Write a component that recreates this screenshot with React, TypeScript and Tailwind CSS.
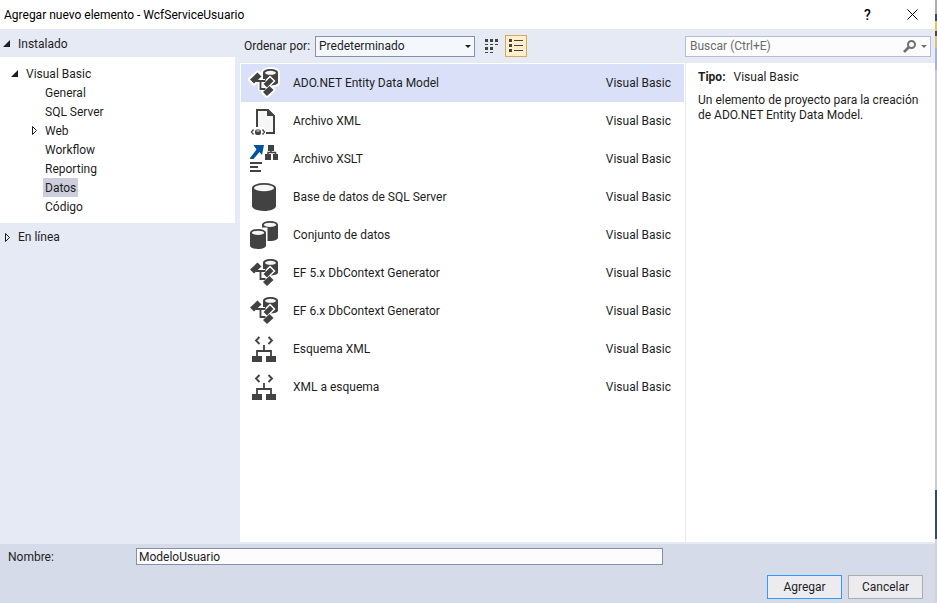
import { ReactNode, useState } from "react";

type IconProps = { selected?: boolean };

type Template = {
  name: string;
  icon: (props: IconProps) => ReactNode;
};

const DARK = "#424242";

const EntityIcon = ({ selected }: IconProps) => (
  <svg width="28" height="28" viewBox="0 0 28 28" className="overflow-visible" aria-hidden="true">
    {selected && (
      <g fill="#fff" stroke="#fff" strokeWidth="4" strokeLinejoin="round">
        <path d="M13 3.500v10c0 2 3 3 7 3s8-1 8-3v-10C28 1.500 24.500 0 20.500 0S13 1.500 13 3.500z" />
        <path d="M0 10.500 7.500 3.500l4 4L4 14.500z" />
        <path d="M13 23l6.500-6 4 4L17 27z" />
        <path d="M7 12h6M10 12v8h5" fill="none" />
      </g>
    )}
    <path d="M13 3.500v10c0 2 3 3 7 3s8-1 8-3v-10C28 1.500 24.500 0 20.500 0S13 1.500 13 3.500z" fill={DARK} />
    <ellipse cx="20.500" cy="3.800" rx="5.500" ry="2" fill="#f6f6f6" />
    <path d="M12.500 15 20 7.500l4.500 4.500-7.500 7.500z" fill={DARK} stroke="#fff" strokeWidth="1.500" />
    <path d="M7 12h8M10.500 12v8h4" fill="none" stroke="#fff" strokeWidth="4" />
    <path d="M0 10.500 7.500 3.500l4 4L4 14.500z" fill={DARK} />
    <path d="M13 23l6.500-6 4 4L17 27z" fill={DARK} />
    <path d="M6 12h9.500M10.500 12v8h5" fill="none" stroke={DARK} strokeWidth="1.800" />
  </svg>
);

const XmlFileIcon = () => (
  <svg width="28" height="28" viewBox="0 0 28 28" aria-hidden="true">
    <path d="M7 20V3h11l6 6v17h-8" fill="#f6f6f6" stroke={DARK} strokeWidth="2" />
    <path d="M17 2v7h8z" fill={DARK} />
    <rect x="5" y="20" width="10" height="8" fill="#fff" />
    <path d="M3.500 22.500 1.500 25l2 2.500M12.500 22.500l2 2.500-2 2.500" fill="none" stroke={DARK} strokeWidth="1.300" />
    <rect x="5" y="22.500" width="6" height="5.500" rx="2" fill={DARK} />
    <path d="M6.500 24h3" stroke="#fff" strokeWidth="1" />
  </svg>
);

const XsltIcon = () => (
  <svg width="28" height="28" viewBox="0 0 28 28" aria-hidden="true">
    <path d="M3.500 0H14l-2 10-2.500-3L3.500 14H0v-1l6.500-8.500z" fill="#00539c" />
    <g fill={DARK}>
      <rect x="18" y="0" width="6" height="6" />
      <rect x="15" y="9" width="6" height="6" />
      <rect x="23" y="9" width="5" height="6" />
      <rect x="0" y="17" width="12" height="2" />
      <rect x="0" y="21" width="8" height="2" />
      <rect x="0" y="25" width="11" height="2" />
    </g>
    <path d="M21 5v2.500M18 9.500v-2h7.500v2" fill="none" stroke={DARK} strokeWidth="1.500" />
  </svg>
);

const DatabaseIcon = () => (
  <svg width="28" height="28" viewBox="0 0 28 28" aria-hidden="true">
    <path d="M2 5v18c0 2.800 5.400 5 12 5s12-2.200 12-5V5z" fill={DARK} />
    <ellipse cx="14" cy="5" rx="12" ry="5" fill={DARK} />
    <ellipse cx="14" cy="5" rx="10" ry="3.300" fill="#f6f6f6" />
  </svg>
);

const DatasetIcon = () => (
  <svg width="28" height="28" viewBox="0 0 28 28" aria-hidden="true">
    <path d="M12 3.500v13C12 18.500 15.600 20 20 20s8-1.500 8-3.500v-13z" fill={DARK} />
    <ellipse cx="20" cy="3.500" rx="8" ry="3.500" fill={DARK} />
    <ellipse cx="20" cy="3.800" rx="6.200" ry="2.100" fill="#f6f6f6" />
    <path d="M-1 6.500h18.500V28H-1z" fill="#fff" />
    <path d="M0 11.500v13C0 26.500 3.600 28 8 28s8-1.500 8-3.500v-13z" fill={DARK} />
    <ellipse cx="8" cy="11.500" rx="8" ry="3.500" fill={DARK} />
    <ellipse cx="8" cy="11.800" rx="6.200" ry="2.100" fill="#f6f6f6" />
  </svg>
);

const SchemaIcon = () => (
  <svg width="28" height="28" viewBox="0 0 28 28" aria-hidden="true">
    <path d="M9.500 2 6 5.500 9.500 9M18.500 2 22 5.500 18.500 9" fill="none" stroke={DARK} strokeWidth="1.800" />
    <path d="M14 10v6M7 22v-6h14v6" fill="none" stroke={DARK} strokeWidth="1.800" />
    <rect x="2" y="21" width="10" height="6" fill={DARK} />
    <rect x="16" y="21" width="10" height="6" fill={DARK} />
  </svg>
);

const SmallIconsIcon = () => (
  <svg width="14" height="14" viewBox="0 0 14 14" fill={DARK} aria-hidden="true">
    <path d="M0 0h3v3H0zM5 0h3v3H5zM10 0h3v3h-3zM0 8h3v3H0zM5 8h3v3H5z" />
    <path d="M0 5h3v1H0zM5 5h3v1H5zM10 5h3v1h-3zM0 13h3v1H0zM5 13h3v1H5z" />
  </svg>
);

const ListIcon = () => (
  <svg width="14" height="14" viewBox="0 0 14 14" fill={DARK} className="shrink-0" aria-hidden="true">
    <path d="M0 0h3v3H0zM0 5h3v3H0zM0 10h3v3H0zM5 1h9v1H5zM5 6h9v1H5zM5 11h9v1H5z" />
  </svg>
);

const SearchIcon = () => (
  <svg width="13" height="13" viewBox="0 0 13 13" fill="none" stroke="#717171" aria-hidden="true">
    <circle cx="8.500" cy="4.500" r="3.500" strokeWidth="2" />
    <path d="M6 7 1 12" strokeWidth="2.600" />
  </svg>
);

const Expanded = () => (
  <svg width="7" height="7" viewBox="0 0 7 7" aria-hidden="true">
    <path d="M7 0v7H0z" fill="#1e1e1e" />
  </svg>
);

const Collapsed = () => (
  <svg width="7" height="9" viewBox="0 0 7 9" aria-hidden="true">
    <path d="M1.500.5v8L5.500 4.500z" fill="none" stroke="#1e1e1e" />
  </svg>
);

const templates: Template[] = [
  { name: "ADO.NET Entity Data Model", icon: EntityIcon },
  { name: "Archivo XML", icon: XmlFileIcon },
  { name: "Archivo XSLT", icon: XsltIcon },
  { name: "Base de datos de SQL Server", icon: DatabaseIcon },
  { name: "Conjunto de datos", icon: DatasetIcon },
  { name: "EF 5.x DbContext Generator", icon: EntityIcon },
  { name: "EF 6.x DbContext Generator", icon: EntityIcon },
  { name: "Esquema XML", icon: SchemaIcon },
  { name: "XML a esquema", icon: SchemaIcon },
];

const categories = ["General", "SQL Server", "Web", "Workflow", "Reporting", "Datos", "Código"];

const TitleBar = () => (
  <header className="flex h-[29px] items-center bg-white pl-1 text-black">
    <h1 className="flex-1">Agregar nuevo elemento - WcfServiceUsuario</h1>
    <button type="button" aria-label="Ayuda" className="w-[45px] text-sm font-medium">
      ?
    </button>
    <button type="button" aria-label="Cerrar" className="flex w-[45px] justify-center">
      <svg width="11" height="11" viewBox="0 0 11 11" stroke="#000" aria-hidden="true">
        <path d="M.5.5l10 10M10.500.5l-10 10" />
      </svg>
    </button>
  </header>
);

const CategoryTree = () => (
  <nav className="w-60 shrink-0">
    <button type="button" className="flex h-7 w-full items-center gap-2 pl-[3px] pt-px">
      <Expanded />
      Instalado
    </button>
    <div className="mr-[5px] bg-white py-[7px]">
      <button type="button" className="flex h-[19px] items-center gap-2 pl-[11px]">
        <Expanded />
        Visual Basic
      </button>
      <ul>
        {categories.map((category) => (
          <li key={category} className="flex h-[19px] items-center pl-[31px]">
            <span className="w-3">{category === "Web" && <Collapsed />}</span>
            <button
              type="button"
              className={category === "Datos" ? "h-[19px] bg-[#cccedb] px-[2px]" : "h-[19px] px-[2px]"}
            >
              {category}
            </button>
          </li>
        ))}
      </ul>
    </div>
    <button type="button" className="flex h-7 w-full items-center gap-[7px] pl-1">
      <Collapsed />
      En línea
    </button>
  </nav>
);

const Toolbar = () => (
  <div className="flex h-[34px] items-center pl-1">
    <label htmlFor="order" className="w-[71px] whitespace-nowrap">
      Ordenar por:
    </label>
    <div className="relative w-40">
      <select
        id="order"
        className="block h-[21px] w-full appearance-none border border-[#8591a8] bg-[#f4f7fc] pl-[3px]"
      >
        <option>Predeterminado</option>
      </select>
      <svg
        width="6"
        height="3"
        viewBox="0 0 6 3"
        className="pointer-events-none absolute right-1 top-[9px]"
        aria-hidden="true"
      >
        <path d="M0 0h6L3 3z" fill="#1e1e1e" />
      </svg>
    </div>
    <button type="button" aria-label="Iconos pequeños" className="ml-[6px] flex h-[22px] w-[22px] items-center justify-center">
      <SmallIconsIcon />
    </button>
    <button
      type="button"
      aria-label="Lista"
      className="ml-[2px] flex h-[22px] w-[22px] items-center justify-center border border-[#d9a95b] bg-[#ffefcb]"
    >
      <ListIcon />
    </button>
  </div>
);

const SearchBox = () => (
  <div className="flex h-[34px] items-center pr-1">
    <div className="flex h-[21px] flex-1 items-center border border-[#b5bdd3] bg-[#fcfcfc] pr-[3px]">
      <input
        type="search"
        aria-label="Buscar"
        placeholder="Buscar (Ctrl+E)"
        className="min-w-0 flex-1 bg-transparent pl-1 outline-none placeholder:text-[#6d6d6d]"
      />
      <SearchIcon />
      <svg width="6" height="3" viewBox="0 0 6 3" className="ml-[5px]" aria-hidden="true">
        <path d="M0 0h6L3 3z" fill="#717171" />
      </svg>
    </div>
  </div>
);

// Sliver of the editor window left visible behind the dialog
const EditorEdge = () => (
  <div className="flex w-[2px] shrink-0 flex-col bg-[#c9cbd5]" aria-hidden="true">
    <div className="h-[14px] bg-[#b9a7b0]" />
    <div className="h-[7px] bg-[#35496a]" />
    <div className="h-[10px] bg-[#e5c365]" />
    <div className="h-[5px] bg-[#5b4040]" />
    <div className="h-[12px] bg-[#d6c08a]" />
    <div className="h-[22px] bg-[#a8b3d3]" />
    <div className="flex-1" />
    <div className="h-[49px] bg-[#35496a]" />
    <div className="h-[64px] bg-[#d0d2d8]" />
  </div>
);

const App = () => {
  const [selected, setSelected] = useState(0);
  const [name, setName] = useState("ModeloUsuario");

  return (
    <div className="flex min-h-screen bg-[#e6eaf4] font-['Roboto','Noto_Sans',sans-serif] text-xs text-[#1e1e1e]">
      <div className="flex min-w-0 flex-1 flex-col">
        <TitleBar />
        <main className="flex flex-1 pb-[2px]">
          <CategoryTree />
          <section className="flex min-w-0 flex-1 flex-col">
            <Toolbar />
            <ul className="flex-1 border-x border-t border-white bg-white">
              {templates.map(({ name: label, icon: Icon }, index) => (
                <li key={label}>
                  <button
                    type="button"
                    onClick={() => setSelected(index)}
                    className={
                      index === selected
                        ? "flex h-[38px] w-full items-center bg-[#d9e0f8] pl-[9px] pr-[13px] text-left"
                        : "flex h-[38px] w-full items-center pl-[9px] pr-[13px] text-left"
                    }
                  >
                    <Icon selected={index === selected} />
                    <span className="ml-[15px] flex-1">{label}</span>
                    <span>Visual Basic</span>
                  </button>
                </li>
              ))}
            </ul>
          </section>
          <aside className="flex w-[250px] shrink-0 flex-col">
            <SearchBox />
            <div className="flex-1 border-l border-[#e6eaf4] bg-white pl-3 pr-2 pt-[6px]">
              <p className="leading-4">
                <strong className="mr-2">Tipo:</strong>
                Visual Basic
              </p>
              <p className="mt-2 leading-[15px]">
                Un elemento de proyecto para la creación de ADO.NET Entity Data Model.
              </p>
            </div>
          </aside>
        </main>
        <footer className="bg-[#d6dbe9] pb-1 pt-1">
          <div className="flex items-center pl-2">
            <label htmlFor="name" className="w-32">
              Nombre:
            </label>
            <input
              id="name"
              value={name}
              onChange={(e) => setName(e.target.value)}
              className="mr-[272px] h-[17px] min-w-0 flex-1 border border-[#8591a8] bg-[#fcfcfc] pl-[2px] outline-none"
            />
          </div>
          <div className="mt-[10px] flex justify-end gap-[6px] pr-3">
            <button type="button" className="h-6 w-[75px] border border-[#3399ff] bg-[#ececf0]">
              Agregar
            </button>
            <button type="button" className="h-6 w-[75px] border border-[#acacac] bg-[#ececf0]">
              Cancelar
            </button>
          </div>
        </footer>
      </div>
      <EditorEdge />
    </div>
  );
};

export default App;
